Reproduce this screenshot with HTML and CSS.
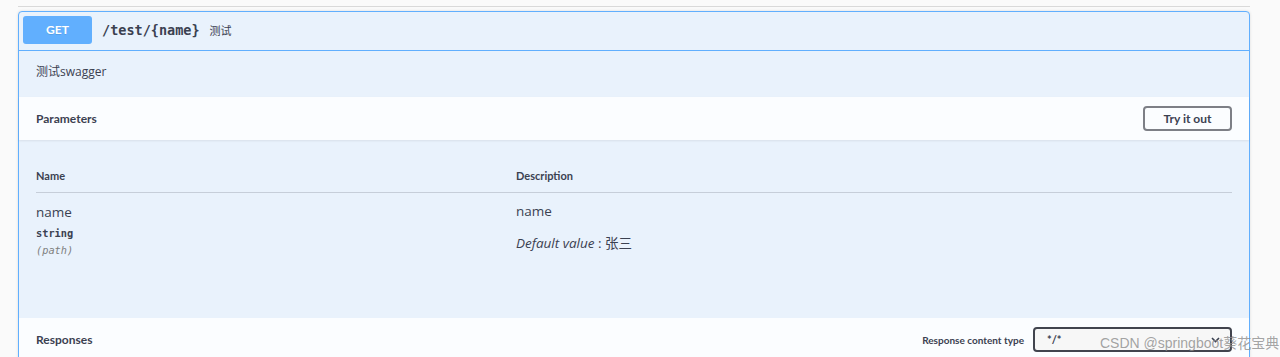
FILE: index.html
```html
<!DOCTYPE html>
<html lang="en">
  <head>
    <meta charset="UTF-8" />
    <meta name="viewport" content="width=device-width, initial-scale=1.0" />
    <title>Swagger UI</title>
    <link rel="stylesheet" href="styles.css">
  </head>
  <body>
    <div class="wrapper">
      <div class="rule"></div>

      <div class="opblock get">
        <div class="opblock-summary">
          <span class="method">GET</span>
          <span class="path">/test/{name}</span>
          <span class="summary-desc">测试</span>
        </div>

        <div class="opblock-description">测试swagger</div>

        <div class="section-header">
          <h4>Parameters</h4>
          <button class="btn try-out">Try it out</button>
        </div>

        <div class="parameters">
          <div class="param-row head">
            <div class="col-name">Name</div>
            <div class="col-desc">Description</div>
          </div>
          <div class="param-row">
            <div class="col-name">
              <div class="param-name">name</div>
              <div class="param-type">string</div>
              <div class="param-in">(path)</div>
            </div>
            <div class="col-desc">
              <div class="param-text">name</div>
              <div class="param-default"><i>Default value</i> : 张三</div>
            </div>
          </div>
        </div>

        <div class="section-header responses">
          <h4>Responses</h4>
          <div class="content-type">
            <label>Response content type</label>
            <div class="select">
              <span>*/*</span>
              <svg width="9" height="6" viewBox="0 0 9 6"><path d="M1 1 L4.5 4.5 L8 1" fill="none" stroke="#3b4151" stroke-width="1.6"/></svg>
            </div>
          </div>
        </div>
      </div>
    </div>

    <div class="watermark">CSDN @springboot葵花宝典</div>
  </body>
</html>
```

FILE: styles.css
```css
body {
  margin: 0;
  background: #fafafa;
  font-family: 'Open Sans', 'Noto Sans CJK SC', sans-serif;
  color: #3b4151;
  height: 357px;
  overflow: hidden;
  position: relative;
}

.wrapper {
  padding: 6px 0 0 18px;
  width: 1232px;
}

.rule {
  height: 1px;
  background: #d9d9d9;
  margin-bottom: 4px;
}

.opblock {
  border: 1px solid #61affe;
  border-radius: 4px;
  background: #e9f2fc;
  box-shadow: 0 0 3px rgba(0, 0, 0, 0.12);
}

.opblock-summary {
  display: flex;
  align-items: center;
  padding: 4px 4px 6px;
  border-bottom: 1px solid #61affe;
}

.method {
  width: 69px;
  height: 28px;
  line-height: 28px;
  text-align: center;
  background: #61affe;
  color: #fff;
  border-radius: 3px;
  font-family: Lato, 'Open Sans', sans-serif;
  font-weight: 700;
  font-size: 12px;
  text-shadow: 0 1px 0 rgba(0, 0, 0, 0.1);
}

.path {
  margin-left: 10px;
  font-family: 'DejaVu Sans Mono', monospace;
  font-weight: 700;
  font-size: 13.5px;
  color: #3b4151;
}

.summary-desc {
  margin-left: 10px;
  font-family: 'Noto Sans CJK SC', sans-serif;
  font-size: 11px;
  color: #3b4151;
}

.opblock-description {
  padding: 12px 17px 16px;
  font-size: 12px;
  line-height: 18px;
}

.section-header {
  display: flex;
  align-items: center;
  justify-content: space-between;
  height: 43px;
  padding: 0 17px;
  background: rgba(255, 255, 255, 0.8);
  box-shadow: 0 1px 2px rgba(0, 0, 0, 0.08);
}

.section-header h4 {
  margin: 0;
  font-family: Lato, 'Open Sans', sans-serif;
  font-size: 12px;
  font-weight: 700;
}

.btn {
  width: 89px;
  height: 25px;
  border: 2px solid #7d7f86;
  border-radius: 4px;
  background: transparent;
  font-family: Lato, 'Open Sans', sans-serif;
  font-weight: 700;
  font-size: 12px;
  color: #3b4151;
  padding: 0;
}

.parameters {
  padding: 0 17px;
  height: 178px;
}

.param-row {
  display: flex;
}

.param-row.head {
  padding: 28px 0 9px;
  border-bottom: 1px solid rgba(59, 65, 81, 0.2);
  font-family: Lato, 'Open Sans', sans-serif;
  font-size: 11px;
  font-weight: 700;
  line-height: 15px;
}

.col-name {
  width: 480px;
}

.col-desc {
  flex: 1;
}

.param-name {
  margin-top: 10px;
  font-size: 13.5px;
  line-height: 18px;
}

.param-type {
  margin-top: 5px;
  font-family: 'DejaVu Sans Mono', monospace;
  font-size: 10.3px;
  font-weight: 700;
  line-height: 14px;
}

.param-in {
  margin-top: 3px;
  font-family: 'DejaVu Sans Mono', monospace;
  font-size: 10.3px;
  font-style: italic;
  color: #808080;
  line-height: 14px;
}

.param-text {
  margin-top: 9px;
  font-size: 13.5px;
  line-height: 18px;
}

.param-default {
  margin-top: 14px;
  font-size: 13.5px;
  line-height: 18px;
}

.responses {
  box-shadow: none;
}

.content-type {
  display: flex;
  align-items: center;
}

.content-type label {
  font-family: Lato, 'Open Sans', sans-serif;
  font-size: 10px;
  font-weight: 700;
  margin-right: 9px;
}

.select {
  display: flex;
  align-items: center;
  justify-content: space-between;
  box-sizing: border-box;
  width: 199px;
  height: 25px;
  padding: 0 10px 0 12px;
  border: 2px solid #41444e;
  border-radius: 4px;
  background: #f7f7f7;
  font-family: Lato, 'Open Sans', sans-serif;
  font-size: 11px;
  font-weight: 700;
}

.watermark {
  position: absolute;
  left: 1100px;
  top: 332px;
  font-family: 'Liberation Sans', 'Noto Sans CJK SC', sans-serif;
  font-size: 14px;
  color: rgba(140, 140, 140, 0.8);
  white-space: nowrap;
}
```
